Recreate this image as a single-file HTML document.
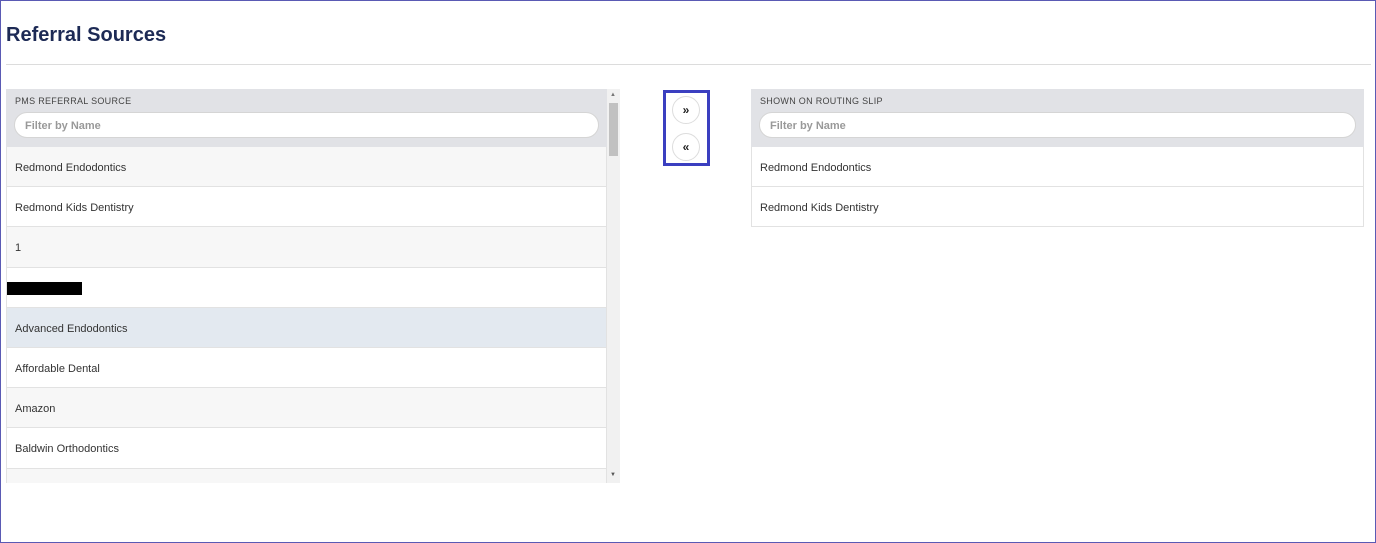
<!DOCTYPE html><html><head><style>
body{margin:0;width:1376px;height:543px;overflow:hidden;font-family:"Liberation Sans",sans-serif;background:#fff;}
.frame{position:absolute;left:0;top:0;width:1374px;height:541px;border:1px solid #5a5ab4;}
h1{position:absolute;left:6px;top:24px;margin:0;font-size:20px;font-weight:bold;color:#1d2a55;}
.hr{position:absolute;left:6px;top:64px;width:1365px;height:1px;background:#dcdcdc;}
.panel{position:absolute;top:89px;overflow:hidden;}
.hd{height:58px;background:#e1e2e6;position:relative;}
.hd .t{position:absolute;left:9px;top:7px;font-size:9px;color:#444;letter-spacing:.3px;}
.hd .in{position:absolute;left:8px;right:8px;top:23px;height:26px;border-radius:13px;background:#fff;border:1px solid #d5d5d5;box-sizing:border-box;font-size:11px;font-weight:bold;color:#999;padding:7px 10px 0;}
.row{height:40.2px;box-sizing:border-box;border-bottom:1px solid #e2e2e2;font-size:11px;color:#333;padding:15px 8px 0;border-left:1px solid #e2e2e2;border-right:1px solid #e2e2e2;}
.row:nth-child(odd){background:#f7f7f7}
.sel{background:#e3e9f0!important}
.sb{position:absolute;left:607px;top:89px;width:13px;height:394px;background:#f1f1f1;}
.btns{position:absolute;left:663px;top:90px;width:41px;height:70px;border:3px solid #3b3fc0;}
.c{position:absolute;left:6px;width:28px;height:28px;border-radius:50%;border:1px solid #ddd;box-sizing:border-box;text-align:center;line-height:26px;font-size:12px;font-weight:bold;color:#222;}
</style></head><body>
<div class="frame"></div>
<h1>Referral Sources</h1>
<div class="hr"></div>
<div class="panel" style="left:6px;width:601px;height:394px;">
<div class="hd"><div class="t">PMS REFERRAL SOURCE</div><div class="in">Filter by Name</div></div>
<div>
<div class="row">Redmond Endodontics</div>
<div class="row" style="background:#fff">Redmond Kids Dentistry</div>
<div class="row">1</div>
<div class="row" style="background:#fff;padding:14px 0 0"><div style="width:75px;height:13px;background:#000"></div></div>
<div class="row sel">Advanced Endodontics</div>
<div class="row" style="background:#fff">Affordable Dental</div>
<div class="row">Amazon</div>
<div class="row" style="background:#fff">Baldwin Orthodontics</div>
<div class="row"></div>
</div></div>
<div class="sb"><div style="position:absolute;left:2px;top:14px;width:9px;height:53px;background:#c1c1c1"></div>
<div style="position:absolute;left:3px;top:3px;font-size:6px;color:#777">▲</div>
<div style="position:absolute;left:3px;top:383px;font-size:6px;color:#555">▼</div></div>
<div class="btns"><div class="c" style="top:3px">»</div><div class="c" style="top:40px">«</div></div>
<div class="panel" style="left:751px;width:613px;height:140px;">
<div class="hd"><div class="t">SHOWN ON ROUTING SLIP</div><div class="in">Filter by Name</div></div>
<div class="row">Redmond Endodontics</div>
<div class="row" style="background:#fff">Redmond Kids Dentistry</div>
</div>
</body></html>
